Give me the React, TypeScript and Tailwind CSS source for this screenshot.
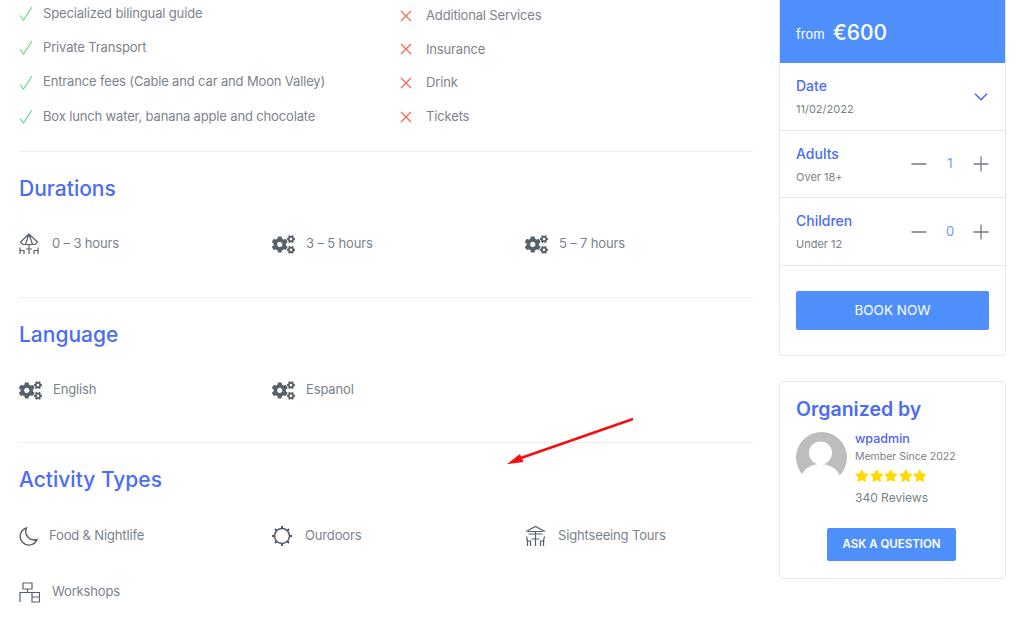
import { Minus, Plus, ChevronDown } from "lucide-react";
import { FaCogs, FaStar } from "react-icons/fa";

const included = [
  "Specialized bilingual guide",
  "Private Transport",
  "Entrance fees (Cable and car and Moon Valley)",
  "Box lunch water, banana apple and chocolate",
];
const excluded = ["Additional Services", "Insurance", "Drink", "Tickets"];

function Tick() {
  return (
    <svg width="14" height="15" viewBox="0 0 14 15" fill="none" stroke="#5fd68a" strokeWidth="1.1" className="shrink-0">
      <path d="M1 9.5l3.5 4.5L13 1" />
    </svg>
  );
}

function Cross() {
  return (
    <svg width="12" height="12" viewBox="0 0 12 12" fill="none" stroke="#f8674f" strokeWidth="1.2" className="shrink-0">
      <path d="M1 1l10 10M11 1L1 11" />
    </svg>
  );
}

function Umbrella() {
  return (
    <svg width="20" height="22" viewBox="0 0 20 22" fill="none" stroke="#56616b" strokeWidth="1.2" className="shrink-0">
      <path d="M10 1L1.500 9 4 11.500h12L18.500 9 10 1zM10 1L6.500 11.500M10 1l3.500 10.500M10 11.500V21M7 16h6M1 14.500V21M1 17.500h4V21M19 14.500V21M19 17.500h-4V21" />
    </svg>
  );
}

function Pavilion() {
  return (
    <svg width="21" height="22" viewBox="0 0 21 22" fill="none" stroke="#56616b" strokeWidth="1.2" className="shrink-0">
      <path d="M1 6.500L10.500 1.500 20 6.500M3 6.500h15M3.500 9h14M10.500 6.500V21M6.500 14h8M1.500 11.500l1 4V21M1.500 16h4v5M19.500 11.500l-1 4V21M19.500 16h-4v5" />
    </svg>
  );
}

function Desks() {
  return (
    <svg width="21" height="21" viewBox="0 0 21 21" fill="none" stroke="#56616b" strokeWidth="1.2" className="shrink-0">
      <path d="M4 1h9v6H4zM8.500 7v3M1 20v-9.500h19.500V20M13 10.500V20h7.500M13 15h7.500" />
    </svg>
  );
}

function Crescent() {
  return (
    <svg width="19" height="19" viewBox="0 0 19 19" fill="none" stroke="#56616b" strokeWidth="1.4" className="shrink-0">
      <path d="M7.500 1A8.700 8.700 0 1 0 18 12.500 8.500 8.500 0 0 1 7.500 1z" />
    </svg>
  );
}

function Sun() {
  return (
    <svg width="20" height="20" viewBox="0 0 20 20" fill="none" stroke="#4f5a65" className="shrink-0">
      <circle cx="10" cy="10" r="7.500" strokeWidth="1.500" />
      <path strokeWidth="2" d="M10 0v2.500M10 17.500V20M0 10h2.500M17.500 10H20M3 3l1.700 1.700M15.300 15.300L17 17M3 17l1.700-1.700M15.300 4.700L17 3" />
    </svg>
  );
}

function Avatar() {
  return (
    <svg width="51" height="51" viewBox="0 0 51 51" className="shrink-0">
      <circle cx="25.500" cy="25.500" r="25.500" fill="#bdbdbd" />
      <circle cx="24.500" cy="21" r="11.500" fill="#fff" />
      <ellipse cx="24.500" cy="48" rx="20" ry="16" fill="#fff" />
    </svg>
  );
}

function Feature({ icon, label, gap }: { icon: React.ReactNode; label: string; gap: string }) {
  return (
    <div className={`flex h-6 items-center text-[13px] tracking-[-0.15px] text-[#7a828c] ${gap}`}>
      {icon}
      <span>{label}</span>
    </div>
  );
}

function Cogs() {
  return <FaCogs className="shrink-0 text-[23px] text-[#56616b]" />;
}

function Counter({ title, note, value, height }: { title: string; note: string; value: string; height: string }) {
  return (
    <div className={`flex items-center justify-between border-b border-[#e6e7ee] pl-4 pr-[12px] ${height}`}>
      <div>
        <div className="text-[14px] font-medium leading-6 text-[#4a6cf8]">{title}</div>
        <div className="mt-[1px] text-[11px] leading-[20px] text-[#7a7f86]">{note}</div>
      </div>
      <div className="flex items-center text-[#717a83]">
        <Minus size={24} strokeWidth={1.300} />
        <span className="w-[38px] text-center text-[13px] text-[#6f97f8]">{value}</span>
        <Plus size={24} strokeWidth={1.300} />
      </div>
    </div>
  );
}

export default function App() {
  return (
    <div className="relative flex h-[639px] w-[1024px] overflow-hidden bg-white pl-[19px] font-['Inter',sans-serif]">
      <div className="w-[734px] shrink-0">
        <div className="flex h-[152px] border-b border-[#eeeef2]">
          <ul className="-mt-[3.500px] w-[381px]">
            {included.map((item) => (
              <li key={item} className="flex h-[34.300px] items-center gap-[10px] text-[13px] tracking-[-0.15px] text-[#7d838c]">
                <Tick />
                {item}
              </li>
            ))}
          </ul>
          <ul className="-mt-[1px]">
            {excluded.map((item) => (
              <li key={item} className="flex h-[33.600px] items-center gap-[14px] text-[13px] tracking-[-0.15px] text-[#7d838c]">
                <Cross />
                {item}
              </li>
            ))}
          </ul>
        </div>

        <section className="border-b border-[#eeeef2] pb-[41px] pt-[24px]">
          <h2 className="text-[21px] font-medium leading-[26px] text-[#4a6cf8]">Durations</h2>
          <div className="mt-[30px] grid grid-cols-[253px_253px_1fr]">
            <Feature icon={<Umbrella />} label="0 – 3 hours" gap="gap-[13px]" />
            <Feature icon={<Cogs />} label="3 – 5 hours" gap="gap-[11px]" />
            <Feature icon={<Cogs />} label="5 – 7 hours" gap="gap-[11px]" />
          </div>
        </section>

        <section className="border-b border-[#eeeef2] pb-[40px] pt-[24px]">
          <h2 className="text-[21px] font-medium leading-[26px] text-[#4a6cf8]">Language</h2>
          <div className="mt-[30px] grid grid-cols-[253px_253px_1fr]">
            <Feature icon={<Cogs />} label="English" gap="gap-[11px]" />
            <Feature icon={<Cogs />} label="Espanol" gap="gap-[11px]" />
          </div>
        </section>

        <section className="pt-[24px]">
          <h2 className="text-[21px] font-medium leading-[26px] text-[#4a6cf8]">Activity Types</h2>
          <div className="mt-[31px] grid grid-cols-[253px_253px_1fr] gap-y-8">
            <Feature icon={<Crescent />} label="Food & Nightlife" gap="gap-[11px]" />
            <Feature icon={<Sun />} label="Ourdoors" gap="gap-[13px]" />
            <Feature icon={<Pavilion />} label="Sightseeing Tours" gap="gap-[12px]" />
            <Feature icon={<Desks />} label="Workshops" gap="gap-[12px]" />
          </div>
        </section>
      </div>

      <aside className="ml-[26px] w-[227px] shrink-0">
        <div className="h-[356px] overflow-hidden rounded-b border border-t-0 border-[#e6e7ee]">
          <div className="flex h-[63px] items-end gap-2 bg-[#4f8ffc] pb-[16px] pl-4 text-white">
            <span className="text-[13px] leading-[26px]">from</span>
            <span className="text-[21px] font-medium leading-[28px]">€600</span>
          </div>
          <div className="flex h-[68px] items-center justify-between border-b border-[#e6e7ee] pl-4 pr-[13px]">
            <div>
              <div className="text-[14px] font-medium leading-6 text-[#4a6cf8]">Date</div>
              <div className="mt-[1px] text-[11px] leading-[20px] text-[#7a7f86]">11/02/2022</div>
            </div>
            <ChevronDown size={22} strokeWidth={1.800} color="#4a6cf8" />
          </div>
          <Counter title="Adults" note="Over 18+" value="1" height="h-[67px]" />
          <Counter title="Children" note="Under 12" value="0" height="h-[68px]" />
          <div className="px-4 pt-[25px]">
            <button className="h-[39px] w-full rounded-[2px] bg-[#4f8ffc] text-[13.500px] text-white">BOOK NOW</button>
          </div>
        </div>

        <div className="mt-[25px] h-[198px] rounded border border-[#e6e7ee] px-4 pt-[14px]">
          <h3 className="text-[19.500px] font-semibold leading-[26px] text-[#4a6cf8]">Organized by</h3>
          <div className="mt-[10px] flex gap-2">
            <Avatar />
            <div className="-mt-[2px]">
              <div className="text-[12.500px] font-medium leading-[18px] text-[#4f5ff0]">wpadmin</div>
              <div className="text-[10.500px] leading-[18px] text-[#7a7f86]">Member Since 2022</div>
              <div className="flex h-[19px] items-center gap-[1px] text-[13.500px] text-[#ffd900]">
                <FaStar />
                <FaStar />
                <FaStar />
                <FaStar />
                <FaStar />
              </div>
              <div className="mt-[2px] text-[12px] leading-[22px] text-[#7a7f86]">340 Reviews</div>
            </div>
          </div>
          <div className="mt-[19px] flex justify-center pr-[2px]">
            <button className="h-[33px] w-[129px] rounded-[2px] bg-[#4f8ffc] text-[11.500px] font-semibold text-white">ASK A QUESTION</button>
          </div>
        </div>
      </aside>

      <svg className="absolute left-[500px] top-[410px]" width="140" height="60" viewBox="0 0 140 60">
        <path d="M133 9L18 49" stroke="#f40f0f" strokeWidth="2.500" />
        <path d="M7 54l13-10 3.500 8z" fill="#f40f0f" />
      </svg>
    </div>
  );
}
